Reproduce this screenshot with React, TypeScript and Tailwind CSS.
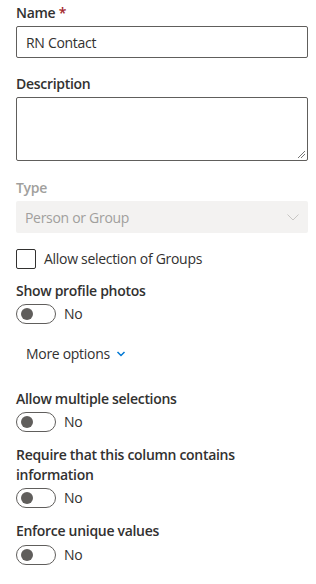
import React from 'react';

const font = { fontFamily: '"Segoe UI", "Open Sans", "Liberation Sans", sans-serif' };

function Label({ children, disabled, className = '' }: { children: React.ReactNode; disabled?: boolean; className?: string }) {
  return (
    <div className={`text-[14px] leading-[20px] font-semibold tracking-[-0.3px] ${disabled ? 'text-[#a19f9d]' : 'text-[#323130]'} ${className}`}>
      {children}
    </div>
  );
}

function Toggle({ className = '' }: { className?: string }) {
  return (
    <div className={`flex items-center ${className}`}>
      <div className="w-[40px] h-[20px] rounded-full border border-[#605e5c] flex items-center px-[4px] bg-white">
        <div className="w-[12px] h-[12px] rounded-full bg-[#605e5c]" />
      </div>
      <span className="ml-[8px] text-[14px] leading-[20px] text-[#323130]">No</span>
    </div>
  );
}

export default function App() {
  return (
    <div className="w-[316px] h-[584px] bg-white px-[16px] pr-[8px] overflow-hidden tracking-[-0.3px]" style={font}>
      <Label className="pt-[3px]">
        Name <span className="text-[#a4262c]">*</span>
      </Label>
      <div className="mt-[3px] h-[32px] border border-[#605e5c] rounded-[2px] flex items-center px-[9px] text-[14px] text-[#323130]">
        RN Contact
      </div>

      <Label className="mt-[16px]">Description</Label>
      <div className="relative mt-[3px] h-[64px] border border-[#605e5c] rounded-[2px]">
        <svg className="absolute right-[1px] bottom-[1px]" width="10" height="10" viewBox="0 0 10 10">
          <path d="M9 2 L2 9 M9 5 L5 9" stroke="#767676" strokeWidth="1" />
        </svg>
      </div>

      <Label disabled className="mt-[17px]">Type</Label>
      <div className="mt-[3px] h-[32px] bg-[#f3f2f1] rounded-[2px] flex items-center justify-between pl-[9px] pr-[8px] text-[14px] text-[#a19f9d]">
        <span>Person or Group</span>
        <svg width="14" height="10" viewBox="0 0 14 10">
          <path d="M1.5 2.5 L7 8 L12.5 2.5" fill="none" stroke="#c8c6c4" strokeWidth="1" />
        </svg>
      </div>

      <div className="mt-[16px] flex items-center">
        <div className="w-[20px] h-[20px] border border-[#323130] rounded-[2px]" />
        <span className="ml-[8px] text-[14px] leading-[20px] text-[#323130]">Allow selection of Groups</span>
      </div>

      <Label className="mt-[12px]">Show profile photos</Label>
      <Toggle className="mt-[3px]" />

      <div className="mt-[20px] ml-[10px] flex items-center text-[14px] leading-[20px] text-[#323130]">
        <span>More options</span>
        <svg className="ml-[6px]" width="10" height="10" viewBox="0 0 10 10">
          <path d="M1.5 3 L5 6.5 L8.5 3" fill="none" stroke="#0078d4" strokeWidth="1.5" />
        </svg>
      </div>

      <Label className="mt-[25px]">Allow multiple selections</Label>
      <Toggle className="mt-[3px]" />

      <Label className="mt-[13px] pr-[40px]">Require that this column contains information</Label>
      <Toggle className="mt-[3px]" />

      <Label className="mt-[13px]">Enforce unique values</Label>
      <Toggle className="mt-[4px]" />
    </div>
  );
}
